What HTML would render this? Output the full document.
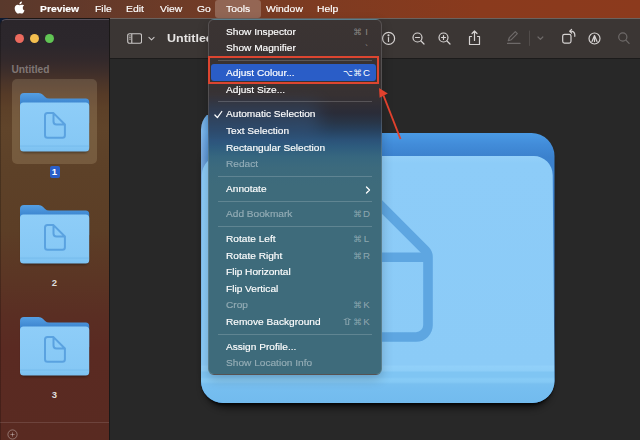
<!DOCTYPE html>
<html><head><meta charset="utf-8">
<style>
*{margin:0;padding:0;box-sizing:border-box}
html,body{width:640px;height:440px;overflow:hidden;background:#282828;font-family:"Liberation Sans",sans-serif;color:#fff}
#root{position:relative;width:640px;height:440px;overflow:hidden;background:#282828}
.abs{position:absolute}
#menubar{left:0;top:0;width:640px;height:17.500px;background:linear-gradient(90deg,#59392c 0%,#62392a 12%,#6e3b27 28%,#7e3b21 50%,#8a3a1d 75%,#8c3a1d 100%)}
#menubar span{position:absolute;top:2.400px;font-size:9.700px;line-height:13px;color:#fff;white-space:nowrap;transform:scaleX(1.070);transform-origin:0 0;-webkit-text-stroke:.150px #fff}
#toolsbg{left:215px;top:0;width:46px;height:17.500px;border-radius:3px;background:rgba(255,255,255,.22)}
#sidebar{left:0;top:18.600px;width:110px;height:421.400px;border-top-left-radius:6px;border-top:1px solid #56505a;border-left:1px solid rgba(0,0,0,.22);background:linear-gradient(180deg,#2b262b 0px,#2c272c 25px,#33292b 40px,#3e2e2a 52px,#4a3429 62px,#553a27 74px,#5c4028 88px,#60442a 108px,#5d4128 150px,#5c3e26 210px,#5b3524 260px,#5a2e23 295px,#5a2a22 330px,#592a21 421px)}
#toolbar{left:110px;top:18.400px;width:530px;height:40.600px;background:#3b3634;border-bottom:1px solid #1c1b1b;border-top:1px solid #6b625e}
.tl{width:9.400px;height:9.400px;border-radius:50%;top:34px}
.thumbsel{left:12.300px;top:79px;width:84.700px;height:84.800px;border-radius:5px;background:rgba(255,232,190,.15)}
.num{font-size:9.5px;font-weight:bold;color:#dedede;width:20px;text-align:center}
#menu{left:208px;top:19px;width:173.500px;height:356px;border-radius:6px;border:1px solid rgba(200,205,210,.2);
background:linear-gradient(180deg,#3b3433 0px,#373132 75px,#2a2c38 93px,#283649 103px,#27405c 110px,#2b5278 120px,#2e5c7e 127px,#37677f 137px,#3c6a7d 148px,#3e6b7b 165px,#3e6b7b 356px);box-shadow:0 4px 12px rgba(0,0,0,.2)}
#menu .it{position:absolute;left:16.800px;font-size:9.600px;line-height:13px;color:#fff;white-space:nowrap;transform:scaleX(1.055);transform-origin:0 0;-webkit-text-stroke:.15px currentColor;margin-top:-.150px}
#menu .dis{color:rgba(255,255,255,.38)}
#menu .sc{position:absolute;right:9.500px;height:13px;line-height:13px;color:rgba(255,255,255,.42);white-space:nowrap;font-size:0}
#menu .sc i{display:inline-block;width:9.800px;text-align:center;font-style:normal;font-family:"DejaVu Sans",sans-serif;font-size:8.500px;line-height:13px;vertical-align:top;position:relative;top:.900px;left:.500px}
#menu .sc i.sh{transform:scale(2.050,1.120);transform-origin:55% 55%}
#menu .sc b{display:inline-block;width:9px;text-align:center;font-weight:normal;font-size:9.700px;line-height:13px;vertical-align:top;position:relative;top:-.150px}
#menu .sep{position:absolute;left:9px;right:9px;height:1px;background:rgba(255,255,255,.18)}
</style></head><body>
<div id="root">
  <div class="abs" style="left:0;top:17px;width:640px;height:3px;background:#1b1615"></div>
  <div class="abs" style="left:0;top:17px;width:8px;height:9px;background:#0e1a30"></div>
  <!-- content area -->
  <div class="abs" style="left:110px;top:59px;width:530px;height:381px;background:#282828"></div>

  <!-- big folder -->
  <svg class="abs" style="left:180px;top:115px" width="400" height="310" viewBox="180 115 400 310">
    <defs>
      <linearGradient id="fb" x1="0" y1="108" x2="0" y2="160" gradientUnits="userSpaceOnUse"><stop offset="0" stop-color="#4690d4"/><stop offset=".46" stop-color="#4b9ce6"/><stop offset=".7" stop-color="#428cd9"/><stop offset=".95" stop-color="#3b81cd"/><stop offset="1" stop-color="#3b81cd"/></linearGradient>
      <linearGradient id="ff" x1="0" y1="156" x2="0" y2="403" gradientUnits="userSpaceOnUse">
        <stop offset="0" stop-color="#93d0f9"/><stop offset=".03" stop-color="#8dccf8"/><stop offset=".845" stop-color="#8bcbf7"/>
        <stop offset=".852" stop-color="#91d0f9"/><stop offset=".868" stop-color="#8ecef8"/><stop offset=".876" stop-color="#7fc5f3"/><stop offset=".895" stop-color="#7fc5f3"/>
        <stop offset=".903" stop-color="#87cbf6"/><stop offset=".915" stop-color="#84c9f5"/><stop offset=".923" stop-color="#79c0f0"/><stop offset=".94" stop-color="#76bef0"/><stop offset="1" stop-color="#72bbee"/>
      </linearGradient>
      <linearGradient id="fl" x1="201" y1="0" x2="214" y2="0" gradientUnits="userSpaceOnUse"><stop offset="0" stop-color="#fff" stop-opacity=".32"/><stop offset="1" stop-color="#fff" stop-opacity="0"/></linearGradient>
      <filter id="sh2" x="-5%" y="-10%" width="110%" height="120%"><feGaussianBlur stdDeviation="1"/></filter>
      <filter id="sh" x="-10%" y="-10%" width="120%" height="125%"><feGaussianBlur stdDeviation="3.500"/></filter>
    </defs>
    <rect x="204" y="142" width="348" height="266" rx="22" fill="#000" opacity=".55" filter="url(#sh)"/>
    <rect x="202" y="300" width="351.500" height="104.800" rx="22" fill="#000" opacity=".7" filter="url(#sh2)"/>
    <path d="M201 129.500 A21 21 0 0 1 222 108.500 H298 C316 108.500 322 133 345 133 H531.500 A23 23 0 0 1 554.500 156 V381 A22 22 0 0 1 532.500 403 H223 A22 22 0 0 1 201 381 Z" fill="url(#fb)"/>
    <path d="M201 129.500 A21 21 0 0 1 222 108.500 H240 V300 H201 Z" fill="url(#fl)"/>
    <path d="M201.800 175 A19 19 0 0 1 220.800 156 H533.700 A19 19 0 0 1 552.700 175 L554.500 381 A22 22 0 0 1 532.500 403 H223 A22 22 0 0 1 201 381 Z" fill="url(#ff)"/>
    <!-- doc glyph -->
    <g fill="none" stroke="#5ea6e1" stroke-width="9.600" stroke-linejoin="round">
      <path d="M330 191 H366 L425.300 250.300 Q428 253 428 257.200 V325 a12 12 0 0 1 -12 12 H330"/>
      <path d="M366 191 V243.700 a13.500 13.500 0 0 0 13.500 13.500 H428"/>
    </g>
  </svg>

  <!-- menubar -->
  <div id="menubar" class="abs">
    <div id="toolsbg" class="abs"></div>
    <svg class="abs" style="left:14.300px;top:1.300px" width="11.500" height="13.500" viewBox="0 0 170 200"><path fill="#fff" d="M150 68c-1 1-20 11-20 35 0 27 24 37 25 37 0 1-4 13-12 25-8 11-16 22-28 22s-15-7-29-7c-14 0-19 7-30 7s-19-10-28-23C18 150 10 128 10 107c0-34 22-52 44-52 12 0 21 8 29 8 7 0 18-8 31-8 5 0 23 0 36 13zM108 36c6-7 10-16 10-26 0-1 0-3-1-4-9 0-20 6-27 14-5 6-10 15-10 25 0 2 0 3 1 4 1 0 2 0 3 0 8 0 18-5 24-13z"/></svg>
    <span style="left:40px;font-weight:bold">Preview</span>
    <span style="left:95px">File</span>
    <span style="left:126px">Edit</span>
    <span style="left:160px">View</span>
    <span style="left:197px">Go</span>
    <span style="left:226px">Tools</span>
    <span style="left:266px">Window</span>
    <span style="left:317px">Help</span>
  </div>

  <!-- sidebar -->
  <div id="sidebar" class="abs"></div>
  <div class="abs" style="left:109px;top:19px;width:1px;height:421px;background:#1a1817"></div>
  <div class="abs tl" style="left:15px;background:#ec6a5e"></div>
  <div class="abs tl" style="left:30px;background:#f4bf4f"></div>
  <div class="abs tl" style="left:45px;background:#61c554"></div>
  <div class="abs" style="left:11.500px;top:63.600px;font-size:10.200px;font-weight:bold;color:rgba(255,255,255,.36)">Untitled</div>
  <div class="abs thumbsel"></div>

  <svg width="0" height="0" style="position:absolute"><defs>
    <g id="fold">
      <rect x="1" y="8" width="67.200" height="52" rx="4" fill="#000" opacity=".35" filter="url(#ts)"/>
      <path d="M0 4 a4 4 0 0 1 4 -4 H18.500 q2.600 0 4.400 1.800 l2.200 2.100 q1.600 1.500 4 1.500 H65.700 a3.500 3.500 0 0 1 3.500 3.500 V30 H0 Z" fill="url(#tb)"/>
      <rect x="0" y="9.600" width="69.200" height="48.900" rx="3.500" fill="url(#tf)"/>
      <rect x="0" y="52.600" width="69.200" height=".9" fill="#6bb3e8" opacity=".55"/>
      <path d="M27.500 20.100 h6 l11.400 11.400 v10.800 a2.500 2.500 0 0 1 -2.500 2.500 h-14.900 a2.500 2.500 0 0 1 -2.500 -2.500 v-19.700 a2.500 2.500 0 0 1 2.500 -2.500 z M33.500 20.100 v8.400 a3 3 0 0 0 3 3 h8.400" fill="none" stroke="#5aa2e0" stroke-width="2" stroke-linejoin="round"/>
    </g>
    <linearGradient id="tb" x1="0" y1="0" x2="0" y2="1"><stop offset="0" stop-color="#559fe3"/><stop offset=".3" stop-color="#4089d2"/><stop offset=".4" stop-color="#3c84cd"/></linearGradient>
    <linearGradient id="tf" x1="0" y1="0" x2="0" y2="1"><stop offset="0" stop-color="#8ecdf8"/><stop offset=".85" stop-color="#86c8f5"/><stop offset="1" stop-color="#7cc1f1"/></linearGradient>
    <filter id="ts" x="-10%" y="-10%" width="120%" height="130%"><feGaussianBlur stdDeviation="1"/></filter>
  </defs></svg>
  <svg class="abs" style="left:16px;top:88.7px" width="78" height="68" viewBox="-4 -4 78 68"><use href="#fold"/></svg>
  <svg class="abs" style="left:16px;top:200.7px" width="78" height="68" viewBox="-4 -4 78 68"><use href="#fold"/></svg>
  <svg class="abs" style="left:16px;top:312.7px" width="78" height="68" viewBox="-4 -4 78 68"><use href="#fold"/></svg>

  <div class="abs" style="left:50px;top:165.500px;width:9.600px;height:12px;border-radius:2px;background:#2b5fc9"></div>
  <div class="abs num" style="left:44.500px;top:165.800px;color:#fff">1</div>
  <div class="abs num" style="left:44.500px;top:277.300px">2</div>
  <div class="abs num" style="left:44.500px;top:389.300px">3</div>
  <div class="abs" style="left:0;top:422px;width:109px;height:1px;background:rgba(255,255,255,.12)"></div>
  <svg class="abs" style="left:7.100px;top:428.500px" width="11" height="11" viewBox="0 0 11 11"><circle cx="5.500" cy="5.500" r="4.600" fill="none" stroke="rgba(255,255,255,.38)" stroke-width=".9"/><path d="M5.500 3.400v4.200M3.400 5.500h4.200" stroke="rgba(255,255,255,.38)" stroke-width=".9"/></svg>

  <!-- toolbar -->
  <div id="toolbar" class="abs"></div>
  <svg class="abs" style="left:126.500px;top:33px" width="15.300" height="11" viewBox="0 0 16 12" preserveAspectRatio="none"><rect x=".75" y=".75" width="14.500" height="10.500" rx="2" fill="none" stroke="#c9c6c5" stroke-width="1.200"/><path d="M5 1v10" stroke="#c9c6c5" stroke-width="1.200"/><path d="M2.200 3.200h1.800M2.200 5h1.800M2.200 6.800h1.800" stroke="#c9c6c5" stroke-width=".8"/></svg>
  <svg class="abs" style="left:147.500px;top:36px" width="7" height="5.200" viewBox="0 0 8 6"><path d="M1 1.500l3 3 3-3" fill="none" stroke="#c9c6c5" stroke-width="1.200" stroke-linecap="round" stroke-linejoin="round"/></svg>
  <div class="abs" style="left:166.500px;top:32.200px;font-size:11.300px;line-height:13px;font-weight:bold;color:#e6e4e3;transform:scaleX(1.106);transform-origin:0 0;white-space:nowrap">Untitled</div>

  <!-- right toolbar icons -->
  <svg class="abs" style="left:378px;top:28px" width="262" height="22" viewBox="378 28 262 22" fill="none" stroke="#d6d3d2" stroke-width="1.200" stroke-linecap="round" stroke-linejoin="round">
    <circle cx="388.600" cy="38.400" r="6"/><path d="M388.500 37.500v4" /><circle cx="388.500" cy="35.300" r=".5" fill="#d6d3d2"/>
    <circle cx="417.500" cy="37.500" r="4.500"/><path d="M421 41l3 3M415.500 37.500h4"/>
    <circle cx="443.500" cy="37.500" r="4.500"/><path d="M447 41l3 3M441.500 37.500h4M443.500 35.500v4"/>
    <path d="M471.500 36.500h-2v8h10v-8h-2M474.500 40.500v-9M472 33.500l2.500-2.500 2.500 2.500"/>
    <g stroke="#6e6a69"><path d="M508.300 40.700l1-3 6-6 2 2-6 6zM507.500 43.400h12.500"/><path d="M538 37l2.400 2.400 2.400-2.400"/></g>
    <path d="M529.500 31v14.500" stroke="#514c4a" stroke-width="1"/>
    <rect x="562.700" y="34.300" width="8.300" height="8.800" rx="1.800"/><path d="M570 31.200h1.300a3.500 3.500 0 0 1 3.500 3.500v1.600M571.600 29.400l-1.900 1.800 1.900 1.800"/>
    <circle cx="594.500" cy="38.500" r="5.500"/><path d="M592 41.500l2.500-6 2.500 6M594.500 38.500v3"/>
    <g stroke="#6e6a69"><circle cx="622.800" cy="37" r="4.100"/><path d="M625.900 40.100l3.200 3.200"/></g>
  </svg>

  <!-- menu -->
  <div id="menu" class="abs">
    <div class="abs" style="left:0;top:0;right:0;bottom:0;overflow:hidden;border-radius:5px"><div class="abs" style="left:-20px;top:84px;width:130px;height:34px;background:#3a5f8c;filter:blur(9px);opacity:.4"></div></div>
    <div class="abs" style="left:2px;right:4.600px;top:44.100px;height:17.100px;border-radius:3px;background:#2a5dc7"></div>
    <div class="it" style="top:5.0px">Show Inspector</div><div class="sc" style="top:5.0px"><i>⌘</i><b>I</b></div>
    <div class="it" style="top:21.4px">Show Magnifier</div><div class="sc" style="top:21.4px;font-size:7px"><b>`</b></div>
    <div class="sep" style="top:40px"></div>
    <div class="it" style="top:46.2px">Adjust Colour...</div><div class="sc" style="top:46.2px;color:#fff"><i>⌥</i><i>⌘</i><b>C</b></div>
    <div class="it" style="top:62.8px">Adjust Size...</div>
    <div class="sep" style="top:81px"></div>
    <svg class="abs" style="left:0;top:85px" width="20" height="20" viewBox="0 85 20 20"><path d="M5.900 95L8.400 97.600L12.800 91.500" fill="none" stroke="#fff" stroke-width="1.250" stroke-linecap="round" stroke-linejoin="round"/></svg>
    <div class="it" style="top:87.6px">Automatic Selection</div>
    <div class="it" style="top:104.3px">Text Selection</div>
    <div class="it" style="top:121.0px">Rectangular Selection</div>
    <div class="it dis" style="top:137.5px">Redact</div>
    <div class="sep" style="top:156px"></div>
    <div class="it" style="top:162.0px">Annotate</div>
    <svg class="abs" style="right:10px;top:166px" width="6" height="8" viewBox="0 0 6 8"><path d="M1.500 1l3 3-3 3" fill="none" stroke="#fff" stroke-width="1.300" stroke-linecap="round" stroke-linejoin="round"/></svg>
    <div class="sep" style="top:181px"></div>
    <div class="it dis" style="top:187.4px">Add Bookmark</div><div class="sc" style="top:187.4px"><i>⌘</i><b>D</b></div>
    <div class="sep" style="top:206px"></div>
    <div class="it" style="top:212.2px">Rotate Left</div><div class="sc" style="top:212.2px"><i>⌘</i><b>L</b></div>
    <div class="it" style="top:228.8px">Rotate Right</div><div class="sc" style="top:228.8px"><i>⌘</i><b>R</b></div>
    <div class="it" style="top:245.3px">Flip Horizontal</div>
    <div class="it" style="top:262.0px">Flip Vertical</div>
    <div class="it dis" style="top:278.6px">Crop</div><div class="sc" style="top:278.6px"><i>⌘</i><b>K</b></div>
    <div class="it" style="top:295.2px">Remove Background</div><div class="sc" style="top:295.2px"><i class="sh">⇧</i><i>⌘</i><b>K</b></div>
    <div class="sep" style="top:314px"></div>
    <div class="it" style="top:319.8px">Assign Profile...</div>
    <div class="it dis" style="top:336.5px">Show Location Info</div>
  </div>

  <!-- red annotation -->
  <div class="abs" style="left:207.500px;top:56px;width:171.500px;height:28px;border:2.200px solid #dc4530"></div>
  <svg class="abs" style="left:375px;top:85px" width="35" height="60" viewBox="375 85 35 60"><path d="M400.500 139L383.500 95.500" stroke="#e1412d" stroke-width="1.900" fill="none"/><path d="M379 88L379.600 97.800L387.800 93.500z" fill="#e1412d"/></svg>
</div>
</body></html>
